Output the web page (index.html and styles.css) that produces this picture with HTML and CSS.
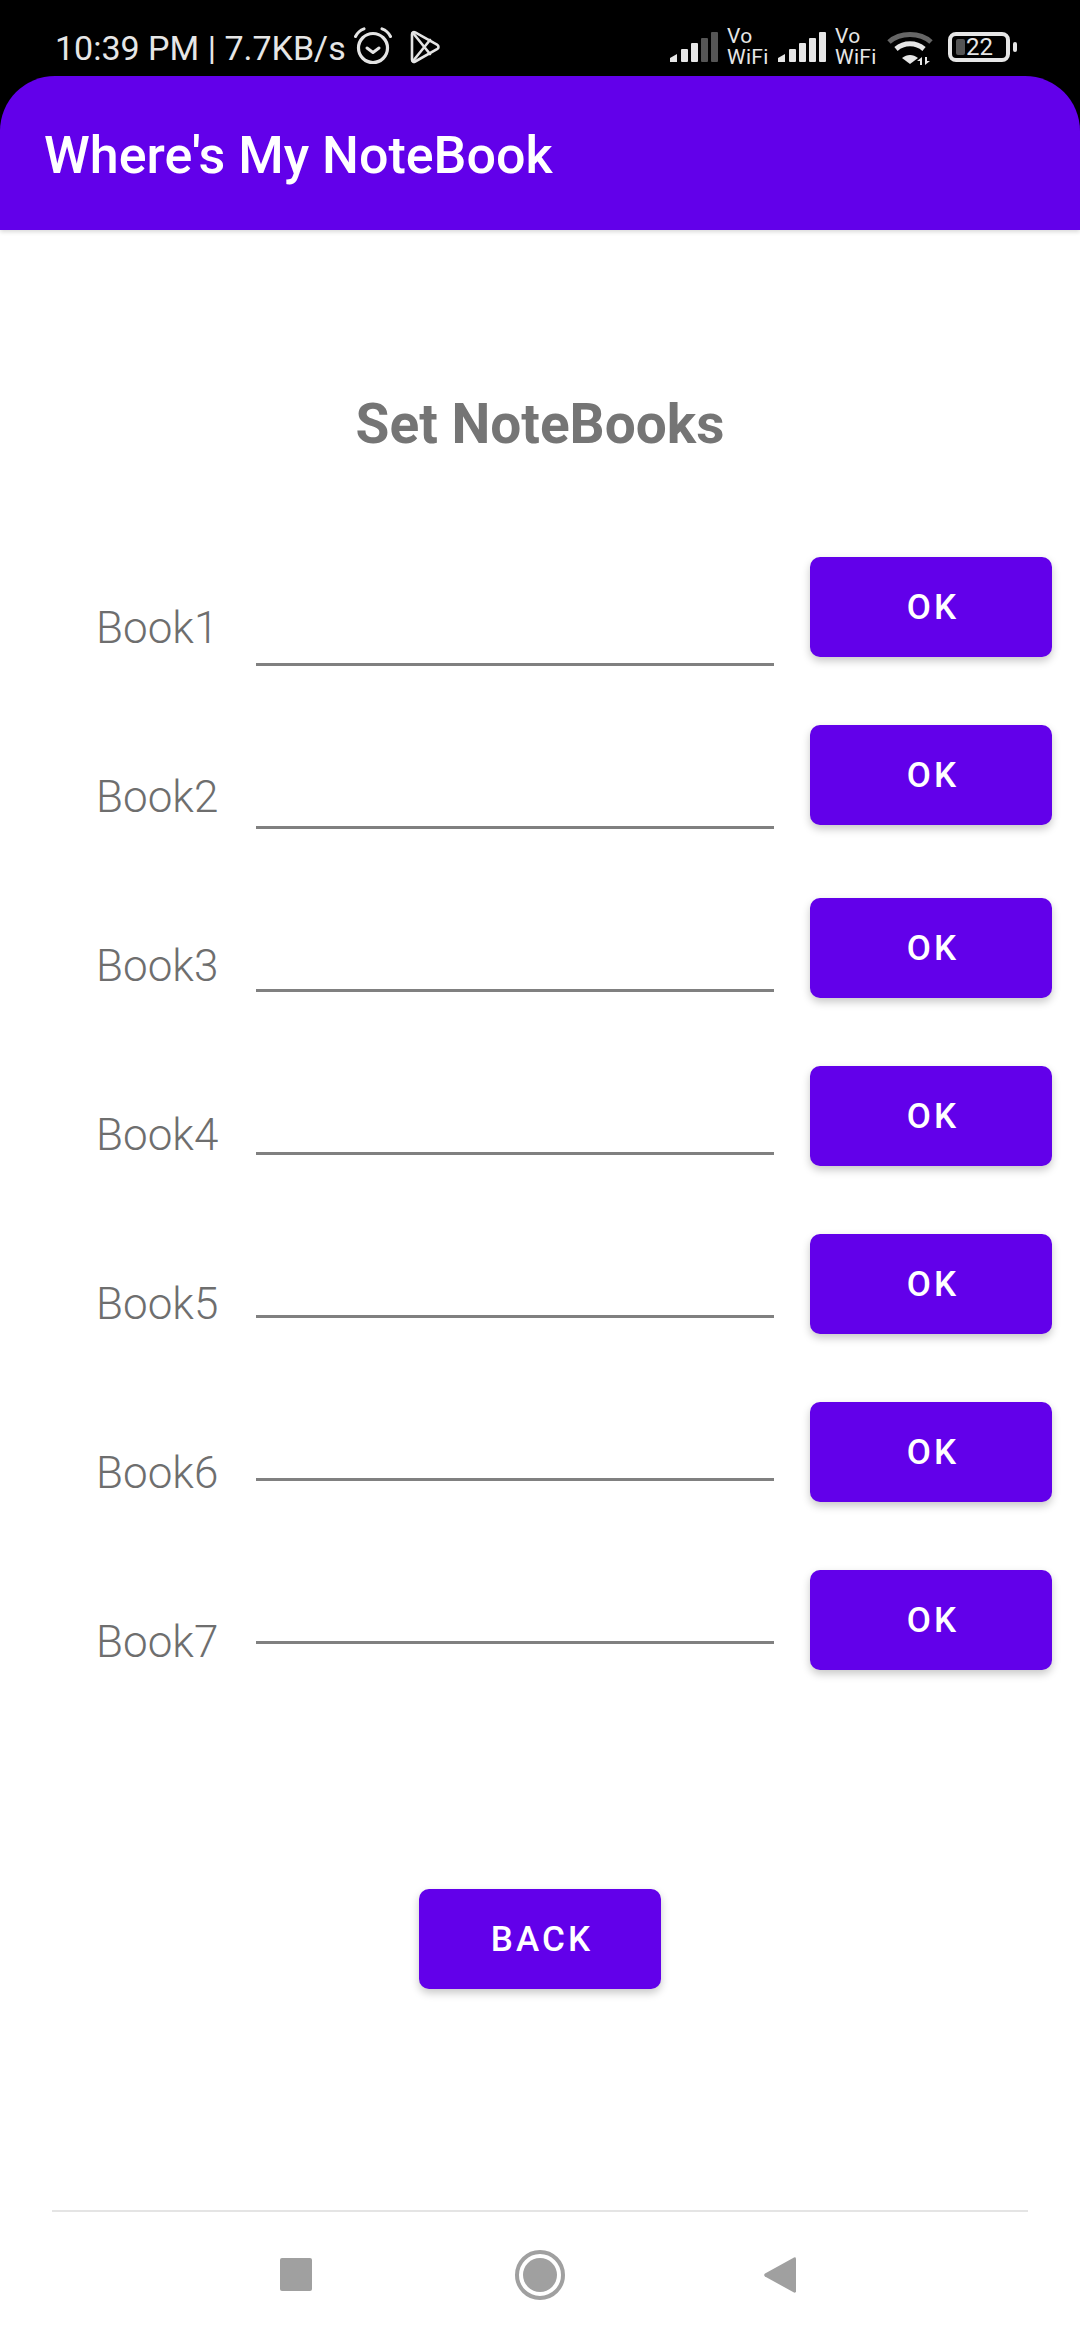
FILE: index.html
```html
<!DOCTYPE html>
<html lang="en">
<head>
<meta charset="utf-8">
<title>Where's My NoteBook</title>
<link rel="stylesheet" href="styles.css">
</head>
<body>
<div class="phone">
  <header class="status">
    <span class="clock">10:39 PM | 7.7KB/s</span>
    <svg class="ic-alarm" viewBox="0 0 40 38" width="40" height="38" fill="none" stroke="#e4e4e4" stroke-linecap="round" stroke-linejoin="round">
      <circle cx="20" cy="21" r="14.5" stroke-width="3.2"/>
      <path d="M14 21l6 4.5 6-4.5" stroke-width="3"/>
      <path d="M2.5 9.5C4.5 5.5 7.5 3 11 1.8M37.5 9.5C35.5 5.5 32.5 3 29 1.8" stroke-width="3"/>
    </svg>
    <svg class="ic-play" viewBox="0 0 30 34" width="30" height="34" fill="none" stroke="#e4e4e4" stroke-width="2.6" stroke-linejoin="round" stroke-linecap="round">
      <path d="M2 4.500C2 2.500 3.500 1.500 5.200 2.400L27 14.600C29 15.800 29 18 27 19.200L5.200 31.500C3.500 32.500 2 31.500 2 29.500Z"/>
      <path d="M3 3L20 24M3 31L20 10"/>
    </svg>
    <span class="spacer"></span>
    <svg class="ic-signal" viewBox="0 0 48 30" width="48" height="30">
      <path d="M0 30V26L7 22V30Z" fill="#e6e6e6"/>
      <rect x="11" y="17" width="7" height="13" rx="1" fill="#e6e6e6"/>
      <rect x="21" y="11" width="7" height="19" rx="1" fill="#e6e6e6"/>
      <rect x="31" y="6" width="7" height="24" rx="1" fill="#555"/>
      <rect x="41" y="0" width="7" height="30" rx="1" fill="#555"/>
    </svg>
    <div class="vo"><div class="vo-line">Vo</div><div class="vo-line">WiFi</div></div>
    <svg class="ic-signal second" viewBox="0 0 48 30" width="48" height="30">
      <path d="M0 30V26L7 22V30Z" fill="#e6e6e6"/>
      <rect x="11" y="17" width="7" height="13" rx="1" fill="#e6e6e6"/>
      <rect x="21" y="11" width="7" height="19" rx="1" fill="#e6e6e6"/>
      <rect x="31" y="6" width="7" height="24" rx="1" fill="#e6e6e6"/>
      <rect x="41" y="0" width="7" height="30" rx="1" fill="#e6e6e6"/>
    </svg>
    <div class="vo"><div class="vo-line">Vo</div><div class="vo-line">WiFi</div></div>
    <svg class="ic-wifi" viewBox="0 0 46 34" width="46" height="34" fill="none">
      <path d="M2 11C13 1 33 1 44 11" stroke="#666" stroke-width="5"/>
      <path d="M9 18C17 11 29 11 37 18" stroke="#e6e6e6" stroke-width="5"/>
      <path d="M23 33L15 27C20 23 26 23 31 27Z" fill="#e6e6e6"/>
      <path d="M34 33V25L29 29H32V33ZM37 25V33L42 29H39V25Z" fill="#e6e6e6" transform="translate(1 1)"/>
    </svg>
    <div class="battery">
      <span class="bat-fill"></span>
      <span class="bat-num">22</span>
    </div>
    <span class="bat-nub"></span>
  </header>

  <div class="appbar">Where's My NoteBook</div>

  <main class="content">
    <h1 class="heading">Set NoteBooks</h1>
    <section class="form">
      <div class="labels">
        <div class="label">Book1</div>
        <div class="label">Book2</div>
        <div class="label">Book3</div>
        <div class="label">Book4</div>
        <div class="label">Book5</div>
        <div class="label">Book6</div>
        <div class="label">Book7</div>
      </div>
      <div class="fields">
        <input class="field" type="text" aria-label="Book1">
        <input class="field" type="text" aria-label="Book2">
        <input class="field" type="text" aria-label="Book3">
        <input class="field" type="text" aria-label="Book4">
        <input class="field" type="text" aria-label="Book5">
        <input class="field" type="text" aria-label="Book6">
        <input class="field" type="text" aria-label="Book7">
      </div>
      <div class="buttons">
        <button class="btn">OK</button>
        <button class="btn">OK</button>
        <button class="btn third">OK</button>
        <button class="btn">OK</button>
        <button class="btn">OK</button>
        <button class="btn">OK</button>
        <button class="btn">OK</button>
      </div>
    </section>
    <div class="back-row"><button class="btn">BACK</button></div>
  </main>

  <nav class="navbar">
    <span class="nav-square"></span>
    <span class="nav-home"><span class="nav-dot"></span></span>
    <svg class="nav-back" viewBox="0 0 32 38" width="32" height="38"><path d="M30 1.500a1.500 1.500 0 0 1 2 1.200V35.300a1.500 1.500 0 0 1-2 1.200L1 20.500a2 2 0 0 1 0-3Z" fill="#a0a0a0"/></svg>
  </nav>
</div>
</body>
</html>
```
FILE: styles.css
```css
* { box-sizing: border-box; }
html, body { margin: 0; padding: 0; }
body { font-family: Roboto, "Liberation Sans", sans-serif; background: #000; }
.phone { width: 1080px; height: 2340px; display: flex; flex-direction: column; background: #000; overflow: hidden; }

.status { height: 76px; flex: none; display: flex; align-items: flex-start; padding-left: 55px; color: #e6e6e6; }
.clock { font-size: 34px; line-height: 40px; margin-top: 28px; width: 290px; white-space: nowrap; }
.ic-alarm { margin-top: 27px; margin-left: 8px; flex: none; }
.ic-play { margin-top: 30px; margin-left: 17px; flex: none; }
.spacer { flex: 1; }
.ic-signal { margin-top: 32px; flex: none; }
.ic-signal.second { margin-left: 9px; }
.vo { margin-top: 26px; margin-left: 9px; width: 42px; flex: none; }
.vo-line { height: 21px; font-size: 21px; line-height: 21px; letter-spacing: .3px; white-space: nowrap; }
.ic-wifi { margin-top: 31px; margin-left: 10px; flex: none; }
.battery { width: 62px; height: 30px; margin-top: 32px; margin-left: 15px; border: 4px solid #e6e6e6; border-radius: 8px; display: flex; align-items: center; padding-left: 4px; flex: none; }
.bat-fill { width: 9px; height: 16px; background: #555; border-radius: 2px; flex: none; }
.bat-num { font-size: 24px; line-height: 22px; color: #e6e6e6; margin-left: 1px; }
.bat-nub { width: 4px; height: 10px; margin-top: 42px; margin-left: 3px; margin-right: 63px; background: #e6e6e6; border-radius: 2px; flex: none; }

.appbar { height: 154px; flex: none; padding-left: 44px; background: #6200ea; border-radius: 55px 55px 0 0; color: #fff; font-size: 52px; font-weight: 500; line-height: 160px; position: relative; z-index: 1; box-shadow: 0 2px 4px rgba(0,0,0,.15); white-space: nowrap; }

.content { flex: 1; background: #fff; display: flex; flex-direction: column; }
.heading { margin: 164px 0 0; height: 60px; font-size: 55px; line-height: 60px; font-weight: 700; color: #757575; text-align: center; }

.form { display: flex; align-items: flex-start; margin-top: 103px; padding-left: 96px; }
.labels { width: 160px; flex: none; display: flex; flex-direction: column; gap: 117px; padding-top: 45px; }
.label { height: 52px; font-size: 44px; line-height: 52px; font-weight: 300; color: #6e6e6e; }
.fields { width: 518px; flex: none; display: flex; flex-direction: column; gap: 103px; padding-top: 49px; }
.field { display: block; width: 100%; height: 60px; border: 0; border-bottom: 3px solid #808080; background: transparent; outline: 0; padding: 0; }
.buttons { display: flex; flex-direction: column; gap: 68px; margin-left: 36px; }
.btn { display: block; width: 242px; height: 100px; padding: 0 0 0 4px; border: 0; border-radius: 10px; background: #6200ea; color: #fff; font-family: Roboto, "Liberation Sans", sans-serif; font-size: 35px; font-weight: 500; letter-spacing: 3.1px; box-shadow: 0 4px 8px rgba(0,0,0,.22); }
.btn.third { margin-top: 5px; }
.back-row { display: flex; justify-content: center; margin-top: 219px; }

.navbar { height: 130px; flex: none; background: #fff; display: flex; align-items: center; padding-left: 280px; position: relative; }
.navbar::before { content: ""; position: absolute; left: 52px; right: 52px; top: 0; height: 2px; background: #e4e4e4; }
.nav-square { width: 32px; height: 33px; margin-top: -1px; background: #a0a0a0; border-radius: 2px; flex: none; }
.nav-home { width: 50px; height: 50px; margin-left: 203px; border: 4px solid #a0a0a0; border-radius: 50%; display: flex; align-items: center; justify-content: center; flex: none; }
.nav-dot { width: 34px; height: 34px; background: #a0a0a0; border-radius: 50%; }
.nav-back { margin-left: 199px; flex: none; }
```
